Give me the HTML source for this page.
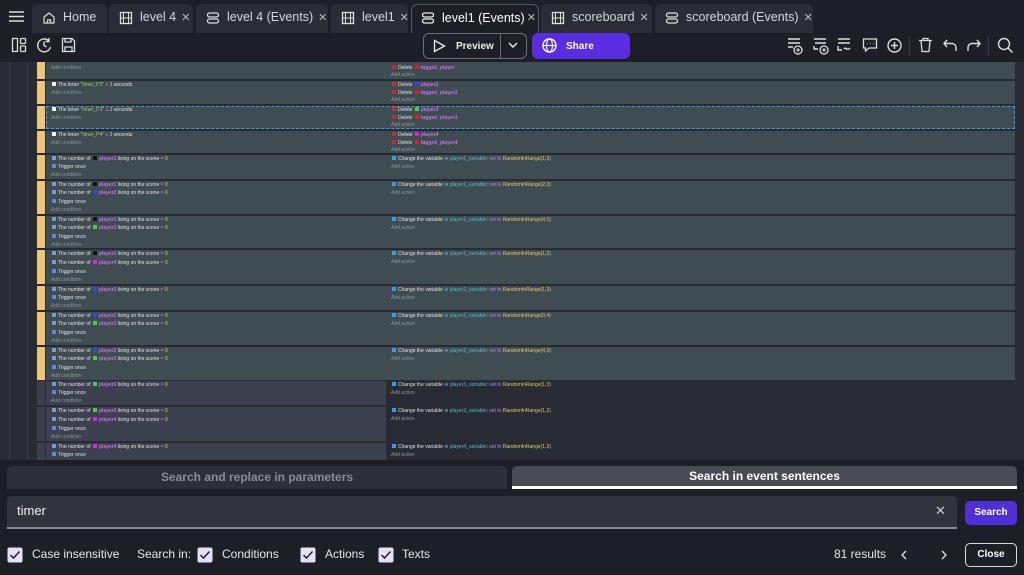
<!DOCTYPE html>
<html><head><meta charset="utf-8"><style>
*{margin:0;padding:0;box-sizing:border-box}
body{width:1024px;height:575px;overflow:hidden;background:#1e1f26;font-family:"Liberation Sans",sans-serif;position:relative;color:#e8e8ee}
.a{position:absolute}
.tab{position:absolute;top:4px;height:29px;background:#2b2c35;border-radius:6px 6px 0 0;font-size:12.5px;color:#d6d6de;line-height:27px;padding-left:31px;white-space:nowrap;overflow:hidden}
.tab .x{font-size:11px;color:#bbb;margin-left:5px}
.tab svg{position:absolute;left:10px;top:7px}
.ic{position:absolute;top:37px}
#ev{position:absolute;left:0;top:62px;width:1024px;height:398px;background:#282b33;overflow:hidden}
.e{position:absolute;left:37px;width:978px}
.st{position:absolute;left:0;top:0;bottom:0;width:8px;background:#ecc579}
.bd{position:absolute;left:9px;right:0;top:0;bottom:0;background:#3f4d52}
.g .st{background:#3b3f4b}
.g .bd{right:auto;width:340px;background:#3d404e}
.l{position:absolute;font-size:5px;line-height:6px;color:#e0e0e0;white-space:nowrap}
.ad{color:#8b9499}
.p{color:#c26ee8;font-weight:bold}
.v{color:#55b8c8}
.s{color:#b982e8}
.n{color:#e3c86a}
.str{color:#9fd05a}
.q{display:inline-block;width:4px;height:4px;margin:0 2px 0 1px;vertical-align:0}
.tl{position:absolute;background:#3c3f48}
</style></head><body>
<div class="a" style="left:0;top:0;width:1024px;height:33px;background:#1e1f26"></div>
<svg class="a" style="left:8px;top:10px" width="17" height="13"><path d="M1 2H16M1 6.5H16M1 11H16" stroke="#ddd" stroke-width="1.6"/></svg>
<div class="tab" style="left:32px;width:75px"><svg width="14" height="14" viewBox="0 0 14 14"><path d="M2 6L7 2L12 6V12H2Z M5.5 12V9H8.5V12" fill="none" stroke="#ddd" stroke-width="1.2"/></svg>Home</div>
<div class="tab" style="left:109px;width:84px"><svg width="14" height="14"><rect x="1.5" y="1.5" width="11" height="11" fill="none" stroke="#ddd" stroke-width="1.3"/><path d="M4.5 1.5V12.5M9.5 1.5V12.5M1.5 7H12.5" stroke="#ddd"/></svg>level 4<span class="x">✕</span></div>
<div class="tab" style="left:196px;width:132px"><svg width="14" height="14"><rect x="1.5" y="2" width="11" height="4" rx="2" fill="none" stroke="#ddd" stroke-width="1.3"/><rect x="1.5" y="8" width="11" height="4" rx="2" fill="none" stroke="#ddd" stroke-width="1.3"/></svg>level 4 (Events)<span class="x">✕</span></div>
<div class="tab" style="left:331px;width:77px"><svg width="14" height="14"><rect x="1.5" y="1.5" width="11" height="11" fill="none" stroke="#ddd" stroke-width="1.3"/><path d="M4.5 1.5V12.5M9.5 1.5V12.5M1.5 7H12.5" stroke="#ddd"/></svg>level1<span class="x">✕</span></div>
<div class="tab" style="left:411px;width:128px;background:#1e1f26;border:1px solid #55565f;border-bottom:none;color:#fff;padding-left:30px"><svg width="14" height="14" style="left:9px;top:6px"><rect x="1.5" y="2" width="11" height="4" rx="2" fill="none" stroke="#eee" stroke-width="1.3"/><rect x="1.5" y="8" width="11" height="4" rx="2" fill="none" stroke="#eee" stroke-width="1.3"/></svg>level1 (Events)<span class="x" style="position:absolute;right:2px">✕</span></div>
<div class="tab" style="left:541px;width:111px"><svg width="14" height="14"><rect x="1.5" y="1.5" width="11" height="11" fill="none" stroke="#ddd" stroke-width="1.3"/><path d="M4.5 1.5V12.5M9.5 1.5V12.5M1.5 7H12.5" stroke="#ddd"/></svg>scoreboard<span class="x">✕</span></div>
<div class="tab" style="left:655px;width:158px"><svg width="14" height="14"><rect x="1.5" y="2" width="11" height="4" rx="2" fill="none" stroke="#ddd" stroke-width="1.3"/><rect x="1.5" y="8" width="11" height="4" rx="2" fill="none" stroke="#ddd" stroke-width="1.3"/></svg>scoreboard (Events)<span class="x">✕</span></div>
<svg class="ic" style="left:11px" width="16" height="16"><rect x="1.5" y="1.5" width="5" height="13" fill="none" stroke="#ddd" stroke-width="1.3"/><rect x="9.5" y="1.5" width="5" height="5" rx="1" fill="none" stroke="#ddd" stroke-width="1.3"/><rect x="9.5" y="9" width="5" height="5.5" rx="1" fill="none" stroke="#ddd" stroke-width="1.3"/></svg>
<svg class="ic" style="left:36px" width="17" height="17"><path d="M13 4A6.5 6.5 0 1 0 14.5 10M13 1V4.5H9.5M8 4.5V8.5L10.5 10" fill="none" stroke="#ddd" stroke-width="1.4"/></svg>
<svg class="ic" style="left:61px" width="15" height="16"><path d="M1.5 1.5H11L13.5 4V14.5H1.5Z M4 1.5V5H10V1.5 M4 14.5V10H11V14.5" fill="none" stroke="#ddd" stroke-width="1.3"/></svg>
<div class="a" style="left:423px;top:33px;width:104px;height:26px;border:1px solid #6c6d75;border-radius:6px"></div>
<div class="a" style="left:500px;top:33px;width:1px;height:26px;background:#6c6d75"></div>
<svg class="a" style="left:433px;top:39px" width="13" height="14"><path d="M1.5 1.5L11.5 7L1.5 12.5Z" fill="none" stroke="#eee" stroke-width="1.3"/></svg>
<div class="a" style="left:456px;top:41px;font-size:10px;line-height:12px;font-weight:bold;color:#eee">Preview</div>
<svg class="a" style="left:508px;top:42px" width="10" height="7"><path d="M1 1L5 5L9 1" fill="none" stroke="#eee" stroke-width="1.4"/></svg>
<div class="a" style="left:532px;top:33px;width:98px;height:26px;background:#5a2de0;border-radius:6px"></div>
<svg class="a" style="left:541px;top:37px" width="17" height="17"><circle cx="8.5" cy="8.5" r="6.5" fill="none" stroke="#fff" stroke-width="1.4"/><ellipse cx="8.5" cy="8.5" rx="3" ry="6.5" fill="none" stroke="#fff" stroke-width="1.2"/><path d="M2 8.5H15" stroke="#fff" stroke-width="1.2"/></svg>
<div class="a" style="left:566px;top:41px;font-size:10px;line-height:12px;font-weight:bold;color:#fff">Share</div>
<svg class="ic" style="left:786px" width="18" height="18"><path d="M2 2H14M2 6H14M2 10H7" stroke="#ddd" stroke-width="1.4" fill="none"/><circle cx="12" cy="13" r="4" fill="none" stroke="#ddd" stroke-width="1.3"/><path d="M12 11V15M10 13H14" stroke="#ddd"/></svg>
<svg class="ic" style="left:812px" width="18" height="18"><path d="M2 2H14M3 6H14M2 9V12H6" stroke="#ddd" stroke-width="1.4" fill="none"/><circle cx="12" cy="13" r="4" fill="none" stroke="#ddd" stroke-width="1.3"/><path d="M12 11V15M10 13H14" stroke="#ddd"/></svg>
<svg class="ic" style="left:836px" width="18" height="18"><path d="M2 2H14M2 6H14M2 9V13H6M8 12C10 9 11 15 14 11" stroke="#ddd" stroke-width="1.4" fill="none"/></svg>
<svg class="ic" style="left:862px" width="16" height="16"><path d="M1.5 2H14.5V11H7L3.5 14V11H1.5Z" fill="none" stroke="#ddd" stroke-width="1.3"/><path d="M5 6.5H5.5M8 6.5H8.5M11 6.5H11.5" stroke="#ddd" stroke-width="1.5"/></svg>
<svg class="ic" style="left:886px" width="17" height="17"><circle cx="8.5" cy="8.5" r="6.5" fill="none" stroke="#ddd" stroke-width="1.4"/><path d="M8.5 5V12M5 8.5H12" stroke="#ddd" stroke-width="1.4"/></svg>
<div class="a" style="left:909px;top:36px;width:1px;height:20px;background:#3a3b44"></div>
<svg class="ic" style="left:918px" width="15" height="16"><path d="M1 3.5H14M5 3.5V1.5H10V3.5M3 3.5L4 14.5H11L12 3.5" fill="none" stroke="#ddd" stroke-width="1.3"/></svg>
<svg class="ic" style="left:942px" width="16" height="16"><path d="M5 3L2 6.5L5 10M2 6.5H10A4 4 0 0 1 14 10.5V14" fill="none" stroke="#ddd" stroke-width="1.4"/></svg>
<svg class="ic" style="left:966px" width="16" height="16"><path d="M11 3L14 6.5L11 10M14 6.5H6A4 4 0 0 0 2 10.5V14" fill="none" stroke="#ddd" stroke-width="1.4"/></svg>
<div class="a" style="left:988px;top:36px;width:1px;height:20px;background:#3a3b44"></div>
<svg class="ic" style="left:997px" width="17" height="17"><circle cx="7" cy="7" r="5.5" fill="none" stroke="#ddd" stroke-width="1.4"/><path d="M11 11L15.5 15.5" stroke="#ddd" stroke-width="1.5"/></svg>

<div id="ev">
<div class="tl" style="left:9px;top:0;width:1px;height:398px"></div>
<div class="tl" style="left:27px;top:0;width:1px;height:398px"></div>

<div class="e" style="top:0;height:17px"><div class="st"></div><div class="bd"></div>
<div class="l ad" style="left:14px;top:3px">Add condition</div>
<div class="l" style="left:354px;top:3px"><span class="q" style="background:#c03030"></span>Delete <span class="q" style="background:#e02020"></span><span class="p">tagged_player</span></div>
<div class="l ad" style="left:354px;top:10px">Add action</div></div>
<div class="e" style="top:19px;height:23px"><div class="st"></div><div class="bd"></div>
<div class="l" style="left:14px;top:1px"><span class="q" style="background:#eee"></span>The timer <span class="str">"timer_P2"</span> <span class="s">≥</span> <span class="n">3</span> seconds</div>
<div class="l ad" style="left:14px;top:9px">Add condition</div>
<div class="l" style="left:354px;top:1px"><span class="q" style="background:#c03030"></span>Delete <span class="q" style="background:#4040e0"></span><span class="p">player2</span></div>
<div class="l" style="left:354px;top:9px"><span class="q" style="background:#c03030"></span>Delete <span class="q" style="background:#e02020"></span><span class="p">tagged_player2</span></div>
<div class="l ad" style="left:354px;top:16px">Add action</div></div>
<div class="e" style="top:44px;height:23px"><div class="st"></div><div class="bd" style="outline:1px dashed #3aa0e0;outline-offset:-1px"></div>
<div class="l" style="left:14px;top:1px"><span class="q" style="background:#eee"></span>The timer <span class="str">"timer_P3"</span> <span class="s">≥</span> <span class="n">3</span> seconds</div>
<div class="l ad" style="left:14px;top:9px">Add condition</div>
<div class="l" style="left:354px;top:1px"><span class="q" style="background:#c03030"></span>Delete <span class="q" style="background:#40d040"></span><span class="p">player3</span></div>
<div class="l" style="left:354px;top:9px"><span class="q" style="background:#c03030"></span>Delete <span class="q" style="background:#e02020"></span><span class="p">tagged_player3</span></div>
<div class="l ad" style="left:354px;top:16px">Add action</div></div>
<div class="e" style="top:69px;height:22px"><div class="st"></div><div class="bd"></div>
<div class="l" style="left:14px;top:1px"><span class="q" style="background:#eee"></span>The timer <span class="str">"timer_P4"</span> <span class="s">≥</span> <span class="n">3</span> seconds</div>
<div class="l ad" style="left:14px;top:9px">Add condition</div>
<div class="l" style="left:354px;top:1px"><span class="q" style="background:#c03030"></span>Delete <span class="q" style="background:#e020e0"></span><span class="p">player4</span></div>
<div class="l" style="left:354px;top:9px"><span class="q" style="background:#c03030"></span>Delete <span class="q" style="background:#e02020"></span><span class="p">tagged_player4</span></div>
<div class="l ad" style="left:354px;top:16px">Add action</div></div>
<div class="e" style="top:93px;height:24px"><div class="st"></div><div class="bd"></div>
<div class="l" style="left:14px;top:1px"><span class="q" style="background:#7a9ad0"></span>The number of <span class="q" style="background:#111"></span><span class="p">player1</span> living on the scene <span class="s">=</span> <span class="n">0</span></div>
<div class="l" style="left:14px;top:9px"><span class="q" style="background:#5a8ae0"></span>Trigger once</div>
<div class="l ad" style="left:14px;top:17px">Add condition</div>
<div class="l" style="left:354px;top:1px"><span class="q" style="background:#3a9ae8"></span>Change the variable <span class="v">⊕ player1_variable</span>: <span class="s">set to</span> <span class="n">RandomInRange(1,3)</span></div>
<div class="l ad" style="left:354px;top:9px">Add action</div></div>
<div class="e" style="top:119px;height:33px"><div class="st"></div><div class="bd"></div>
<div class="l" style="left:14px;top:1px"><span class="q" style="background:#7a9ad0"></span>The number of <span class="q" style="background:#111"></span><span class="p">player1</span> living on the scene <span class="s">=</span> <span class="n">0</span></div>
<div class="l" style="left:14px;top:9px"><span class="q" style="background:#7a9ad0"></span>The number of <span class="q" style="background:#4040e0"></span><span class="p">player2</span> living on the scene <span class="s">=</span> <span class="n">0</span></div>
<div class="l" style="left:14px;top:18px"><span class="q" style="background:#5a8ae0"></span>Trigger once</div>
<div class="l ad" style="left:14px;top:26px">Add condition</div>
<div class="l" style="left:354px;top:1px"><span class="q" style="background:#3a9ae8"></span>Change the variable <span class="v">⊕ player1_variable</span>: <span class="s">set to</span> <span class="n">RandomInRange(2,3)</span></div>
<div class="l ad" style="left:354px;top:9px">Add action</div></div>
<div class="e" style="top:154px;height:32px"><div class="st"></div><div class="bd"></div>
<div class="l" style="left:14px;top:1px"><span class="q" style="background:#7a9ad0"></span>The number of <span class="q" style="background:#111"></span><span class="p">player1</span> living on the scene <span class="s">=</span> <span class="n">0</span></div>
<div class="l" style="left:14px;top:9px"><span class="q" style="background:#7a9ad0"></span>The number of <span class="q" style="background:#40d040"></span><span class="p">player3</span> living on the scene <span class="s">=</span> <span class="n">0</span></div>
<div class="l" style="left:14px;top:18px"><span class="q" style="background:#5a8ae0"></span>Trigger once</div>
<div class="l ad" style="left:14px;top:26px">Add condition</div>
<div class="l" style="left:354px;top:1px"><span class="q" style="background:#3a9ae8"></span>Change the variable <span class="v">⊕ player1_variable</span>: <span class="s">set to</span> <span class="n">RandomInRange(4,5)</span></div>
<div class="l ad" style="left:354px;top:9px">Add action</div></div>
<div class="e" style="top:188px;height:34px"><div class="st"></div><div class="bd"></div>
<div class="l" style="left:14px;top:1px"><span class="q" style="background:#7a9ad0"></span>The number of <span class="q" style="background:#111"></span><span class="p">player1</span> living on the scene <span class="s">=</span> <span class="n">0</span></div>
<div class="l" style="left:14px;top:10px"><span class="q" style="background:#7a9ad0"></span>The number of <span class="q" style="background:#e020e0"></span><span class="p">player4</span> living on the scene <span class="s">=</span> <span class="n">0</span></div>
<div class="l" style="left:14px;top:19px"><span class="q" style="background:#5a8ae0"></span>Trigger once</div>
<div class="l ad" style="left:14px;top:27px">Add condition</div>
<div class="l" style="left:354px;top:1px"><span class="q" style="background:#3a9ae8"></span>Change the variable <span class="v">⊕ player1_variable</span>: <span class="s">set to</span> <span class="n">RandomInRange(1,2)</span></div>
<div class="l ad" style="left:354px;top:9px">Add action</div></div>
<div class="e" style="top:224px;height:24px"><div class="st"></div><div class="bd"></div>
<div class="l" style="left:14px;top:1px"><span class="q" style="background:#7a9ad0"></span>The number of <span class="q" style="background:#4040e0"></span><span class="p">player2</span> living on the scene <span class="s">=</span> <span class="n">0</span></div>
<div class="l" style="left:14px;top:9px"><span class="q" style="background:#5a8ae0"></span>Trigger once</div>
<div class="l ad" style="left:14px;top:17px">Add condition</div>
<div class="l" style="left:354px;top:1px"><span class="q" style="background:#3a9ae8"></span>Change the variable <span class="v">⊕ player2_variable</span>: <span class="s">set to</span> <span class="n">RandomInRange(1,3)</span></div>
<div class="l ad" style="left:354px;top:9px">Add action</div></div>
<div class="e" style="top:250px;height:33px"><div class="st"></div><div class="bd"></div>
<div class="l" style="left:14px;top:1px"><span class="q" style="background:#7a9ad0"></span>The number of <span class="q" style="background:#4040e0"></span><span class="p">player2</span> living on the scene <span class="s">=</span> <span class="n">0</span></div>
<div class="l" style="left:14px;top:9px"><span class="q" style="background:#7a9ad0"></span>The number of <span class="q" style="background:#40d040"></span><span class="p">player3</span> living on the scene <span class="s">=</span> <span class="n">0</span></div>
<div class="l" style="left:14px;top:18px"><span class="q" style="background:#5a8ae0"></span>Trigger once</div>
<div class="l ad" style="left:14px;top:26px">Add condition</div>
<div class="l" style="left:354px;top:1px"><span class="q" style="background:#3a9ae8"></span>Change the variable <span class="v">⊕ player2_variable</span>: <span class="s">set to</span> <span class="n">RandomInRange(3,4)</span></div>
<div class="l ad" style="left:354px;top:9px">Add action</div></div>
<div class="e" style="top:285px;height:33px"><div class="st"></div><div class="bd"></div>
<div class="l" style="left:14px;top:1px"><span class="q" style="background:#7a9ad0"></span>The number of <span class="q" style="background:#4040e0"></span><span class="p">player2</span> living on the scene <span class="s">=</span> <span class="n">0</span></div>
<div class="l" style="left:14px;top:9px"><span class="q" style="background:#7a9ad0"></span>The number of <span class="q" style="background:#40d040"></span><span class="p">player3</span> living on the scene <span class="s">=</span> <span class="n">0</span></div>
<div class="l" style="left:14px;top:18px"><span class="q" style="background:#5a8ae0"></span>Trigger once</div>
<div class="l ad" style="left:14px;top:26px">Add condition</div>
<div class="l" style="left:354px;top:1px"><span class="q" style="background:#3a9ae8"></span>Change the variable <span class="v">⊕ player2_variable</span>: <span class="s">set to</span> <span class="n">RandomInRange(4,3)</span></div>
<div class="l ad" style="left:354px;top:9px">Add action</div></div>
<div class="e g" style="top:319px;height:24px"><div class="st"></div><div class="bd"></div>
<div class="l" style="left:14px;top:1px"><span class="q" style="background:#7a9ad0"></span>The number of <span class="q" style="background:#40d040"></span><span class="p">player3</span> living on the scene <span class="s">=</span> <span class="n">0</span></div>
<div class="l" style="left:14px;top:9px"><span class="q" style="background:#5a8ae0"></span>Trigger once</div>
<div class="l ad" style="left:14px;top:17px">Add condition</div>
<div class="l" style="left:354px;top:1px"><span class="q" style="background:#3a9ae8"></span>Change the variable <span class="v">⊕ player3_variable</span>: <span class="s">set to</span> <span class="n">RandomInRange(1,3)</span></div>
<div class="l ad" style="left:354px;top:9px">Add action</div></div>
<div class="e g" style="top:345px;height:34px"><div class="st"></div><div class="bd"></div>
<div class="l" style="left:14px;top:1px"><span class="q" style="background:#7a9ad0"></span>The number of <span class="q" style="background:#40d040"></span><span class="p">player3</span> living on the scene <span class="s">=</span> <span class="n">0</span></div>
<div class="l" style="left:14px;top:10px"><span class="q" style="background:#7a9ad0"></span>The number of <span class="q" style="background:#e020e0"></span><span class="p">player4</span> living on the scene <span class="s">=</span> <span class="n">0</span></div>
<div class="l" style="left:14px;top:19px"><span class="q" style="background:#5a8ae0"></span>Trigger once</div>
<div class="l ad" style="left:14px;top:27px">Add condition</div>
<div class="l" style="left:354px;top:1px"><span class="q" style="background:#3a9ae8"></span>Change the variable <span class="v">⊕ player3_variable</span>: <span class="s">set to</span> <span class="n">RandomInRange(1,2)</span></div>
<div class="l ad" style="left:354px;top:9px">Add action</div></div>
<div class="e g" style="top:381px;height:24px"><div class="st"></div><div class="bd"></div>
<div class="l" style="left:14px;top:1px"><span class="q" style="background:#7a9ad0"></span>The number of <span class="q" style="background:#e020e0"></span><span class="p">player4</span> living on the scene <span class="s">=</span> <span class="n">0</span></div>
<div class="l" style="left:14px;top:9px"><span class="q" style="background:#5a8ae0"></span>Trigger once</div>
<div class="l" style="left:354px;top:1px"><span class="q" style="background:#3a9ae8"></span>Change the variable <span class="v">⊕ player4_variable</span>: <span class="s">set to</span> <span class="n">RandomInRange(1,3)</span></div>
<div class="l ad" style="left:354px;top:9px">Add action</div></div>
</div>

<div class="a" style="left:0;top:460px;width:1024px;height:115px;background:#1e1f26"></div>
<div class="a" style="left:7px;top:466px;width:500px;height:23px;background:#2e2f38;border-radius:5px 5px 0 0;text-align:center;font-size:12px;font-weight:bold;color:#8a8b95;line-height:22px">Search and replace in parameters</div>
<div class="a" style="left:512px;top:466px;width:505px;height:23px;background:#494a54;border-radius:5px 5px 0 0;text-align:center;font-size:12px;font-weight:bold;color:#fff;line-height:21px">Search in event sentences</div>
<div class="a" style="left:512px;top:486px;width:505px;height:3px;background:#fff;border-top:1px solid #fff"></div>
<div class="a" style="left:7px;top:496px;width:950px;height:33px;background:#32333d;border-bottom:2px solid #8a8b92;border-radius:4px 4px 0 0"></div>
<div class="a" style="left:17px;top:503px;font-size:13px;color:#f0f0f0">timer</div>
<div class="a" style="left:935px;top:503px;font-size:13px;color:#ccc">✕</div>
<div class="a" style="left:965px;top:501px;width:52px;height:24px;background:#4f2fd6;border-radius:5px;font-size:10px;font-weight:bold;color:#fff;text-align:center;line-height:24px">Search</div>
<svg class="a" style="left:7px;top:547px" width="17" height="17"><rect x="0.5" y="0.5" width="15" height="15" rx="2" fill="#e6e0f7"/><path d="M3.5 8L6.5 11L12.5 4.5" fill="none" stroke="#222" stroke-width="1.5"/></svg>
<div class="a" style="left:32px;top:547px;font-size:12px;color:#e6e6ec">Case insensitive</div>
<div class="a" style="left:137px;top:547px;font-size:12px;color:#e6e6ec">Search in:</div>
<svg class="a" style="left:197px;top:547px" width="17" height="17"><rect x="0.5" y="0.5" width="15" height="15" rx="2" fill="#e6e0f7"/><path d="M3.5 8L6.5 11L12.5 4.5" fill="none" stroke="#222" stroke-width="1.5"/></svg>
<div class="a" style="left:222px;top:547px;font-size:12px;color:#e6e6ec">Conditions</div>
<svg class="a" style="left:300px;top:547px" width="17" height="17"><rect x="0.5" y="0.5" width="15" height="15" rx="2" fill="#e6e0f7"/><path d="M3.5 8L6.5 11L12.5 4.5" fill="none" stroke="#222" stroke-width="1.5"/></svg>
<div class="a" style="left:325px;top:547px;font-size:12px;color:#e6e6ec">Actions</div>
<svg class="a" style="left:378px;top:547px" width="17" height="17"><rect x="0.5" y="0.5" width="15" height="15" rx="2" fill="#e6e0f7"/><path d="M3.5 8L6.5 11L12.5 4.5" fill="none" stroke="#222" stroke-width="1.5"/></svg>
<div class="a" style="left:402px;top:547px;font-size:12px;color:#e6e6ec">Texts</div>
<div class="a" style="left:834px;top:547px;font-size:12px;color:#e6e6ec">81 results</div>
<svg class="a" style="left:900px;top:550px" width="8" height="10"><path d="M6 1L2 5L6 9" fill="none" stroke="#ddd" stroke-width="1.4"/></svg>
<svg class="a" style="left:940px;top:550px" width="8" height="10"><path d="M2 1L6 5L2 9" fill="none" stroke="#ddd" stroke-width="1.4"/></svg>
<div class="a" style="left:965px;top:543px;width:52px;height:24px;border:1px solid #ddd;border-radius:5px;font-size:10px;font-weight:bold;color:#fff;text-align:center;line-height:22px">Close</div>
</body></html>
